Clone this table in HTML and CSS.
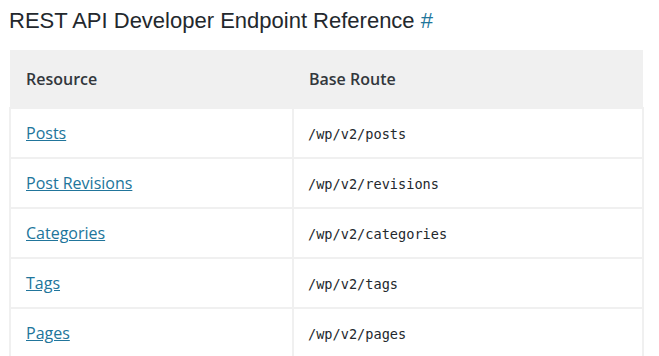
FILE: index.html
```html
<!DOCTYPE html>
<html>
<head>
<meta charset="utf-8">
<link rel="stylesheet" href="styles.css">
</head>
<body>
<h2 class="title">REST API Developer Endpoint Reference <a class="anchor" href="#">#</a></h2>
<table class="ref">
<thead>
<tr><th class="c1">Resource</th><th>Base Route</th></tr>
</thead>
<tbody>
<tr><td><a href="#">Posts</a></td><td class="route"><code>/wp/v2/posts</code></td></tr>
<tr><td><a href="#">Post Revisions</a></td><td class="route"><code>/wp/v2/revisions</code></td></tr>
<tr><td><a href="#">Categories</a></td><td class="route"><code>/wp/v2/categories</code></td></tr>
<tr><td><a href="#">Tags</a></td><td class="route"><code>/wp/v2/tags</code></td></tr>
<tr><td><a href="#">Pages</a></td><td class="route"><code>/wp/v2/pages</code></td></tr>
</tbody>
</table>
</body>
</html>
```
FILE: styles.css
```css
body {
  margin: 0;
  padding: 0 15px 0 9px;
  background: #fff;
  font-family: "Open Sans", sans-serif;
  color: #32373c;
}
.title {
  margin: 8px 0 0 0;
  height: 42px;
  font-family: "Liberation Sans", Arial, sans-serif;
  font-weight: 400;
  font-size: 22px;
  line-height: 26px;
  color: #23282d;
}
.anchor {
  color: #21759b;
  text-decoration: none;
}
.ref {
  width: 635px;
  border-collapse: collapse;
  font-size: 16px;
}
.ref th {
  background: #f0f0f0;
  text-align: left;
  font-weight: 600;
  height: 58px;
  padding: 0 16px;
  box-sizing: border-box;
  color: #32373c;
}
.ref th.c1 {
  width: 283px;
}
.ref td {
  border: 2px solid #f0f0f0;
  height: 50px;
  padding: 0 15px;
  box-sizing: border-box;
}
.ref td.route {
  padding-left: 14px;
}
.ref a {
  color: #21759b;
}
.ref code {
  font-family: "DejaVu Sans Mono", monospace;
  font-size: 13.6px;
  color: #23282d;
}
```
